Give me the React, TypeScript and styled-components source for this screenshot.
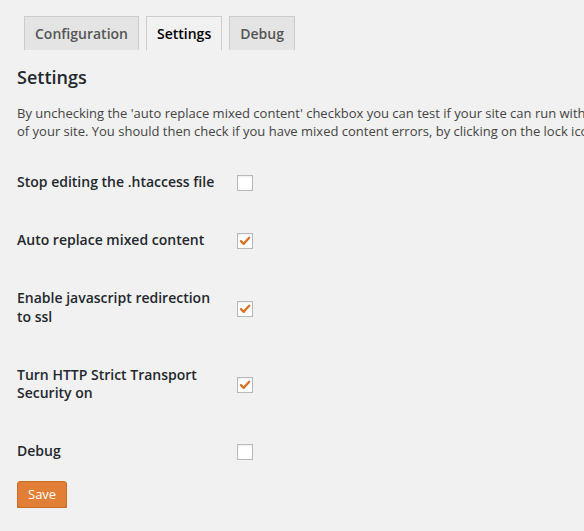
import React from "react";
import styled, { createGlobalStyle } from "styled-components";

const GlobalStyle = createGlobalStyle`
  html, body {
    margin: 0;
    padding: 0;
    background: #f1f1f1;
    overflow: hidden;
  }
  body {
    font-family: "Open Sans", "Liberation Sans", sans-serif;
    color: #444;
    font-size: 13px;
  }
`;

const Wrap = styled.div`
  padding: 16px 0 0 17px;
`;

const TabBar = styled.nav`
  display: flex;
  gap: 7px;
  padding-left: 7px;
`;

const Tab = styled.a<{ $active?: boolean }>`
  display: block;
  padding: 5px 10px 4px;
  font-size: 14px;
  line-height: 24px;
  font-weight: 600;
  border: 1px solid #ccc;
  border-bottom: none;
  background: ${(p) => (p.$active ? "#f1f1f1" : "#e4e4e4")};
  color: ${(p) => (p.$active ? "#000" : "#555")};
  text-decoration: none;
`;

const Title = styled.h2`
  margin: 16px 0 0;
  font-size: 18px;
  line-height: 23px;
  font-weight: 600;
  color: #23282d;
`;

const Intro = styled.p`
  margin: 15px 0 0;
  font-size: 13px;
  line-height: 18px;
  color: #444;
  white-space: nowrap;
`;

const Line = styled.span`
  display: block;
`;

const Form = styled.div`
  display: grid;
  grid-template-columns: 210px auto;
  margin-top: 13px;
`;

const Label = styled.div`
  padding: 20px 10px 20px 0;
  font-size: 14px;
  line-height: 18.2px;
  font-weight: 600;
  color: #23282d;
  width: 200px;
`;

const BoxCell = styled.div`
  display: flex;
  align-items: center;
  padding: 2px 10px 0;
`;

const Box = styled.span`
  display: flex;
  align-items: center;
  justify-content: center;
  box-sizing: border-box;
  width: 16px;
  height: 16px;
  border: 1px solid #b4b9be;
  background: #fff;
  box-shadow: inset 0 1px 2px rgba(0, 0, 0, 0.07);
`;

const SaveButton = styled.button`
  display: block;
  margin-top: 1px;
  height: 27px;
  padding: 0 10px 1px;
  font-family: "Open Sans", "Liberation Sans", sans-serif;
  font-size: 13px;
  line-height: 25px;
  color: #fff;
  background: #e07f35;
  border: 1px solid #c96d26;
  border-radius: 3px;
  box-shadow: 0 1px 0 #b9621f;
  cursor: pointer;
`;

const Check = () => (
  <svg width="12" height="12" viewBox="0 0 12 12">
    <path
      d="M2 6.2 L4.7 8.8 L10.2 2.8"
      fill="none"
      stroke="#d8722a"
      strokeWidth="2.4"
      strokeLinecap="round"
      strokeLinejoin="round"
    />
  </svg>
);

const options = [
  { label: "Stop editing the .htaccess file", checked: false },
  { label: "Auto replace mixed content", checked: true },
  { label: "Enable javascript redirection to ssl", checked: true },
  { label: "Turn HTTP Strict Transport Security on", checked: true },
  { label: "Debug", checked: false },
];

export default function App() {
  return (
    <>
      <GlobalStyle />
      <Wrap>
        <TabBar>
          <Tab>Configuration</Tab>
          <Tab $active>Settings</Tab>
          <Tab>Debug</Tab>
        </TabBar>
        <Title>Settings</Title>
        <Intro>
          <Line>
            By unchecking the 'auto replace mixed content' checkbox you can test if your site can run without this extra
            functionality. Uncheck, empty your cache when you use one, and go to the front end
          </Line>
          <Line>
            of your site. You should then check if you have mixed content errors, by clicking on the lock icon in the
            addres bar.
          </Line>
        </Intro>
        <Form>
          {options.map((o) => (
            <React.Fragment key={o.label}>
              <Label>{o.label}</Label>
              <BoxCell>
                <Box>{o.checked && <Check />}</Box>
              </BoxCell>
            </React.Fragment>
          ))}
        </Form>
        <SaveButton>Save</SaveButton>
      </Wrap>
    </>
  );
}
